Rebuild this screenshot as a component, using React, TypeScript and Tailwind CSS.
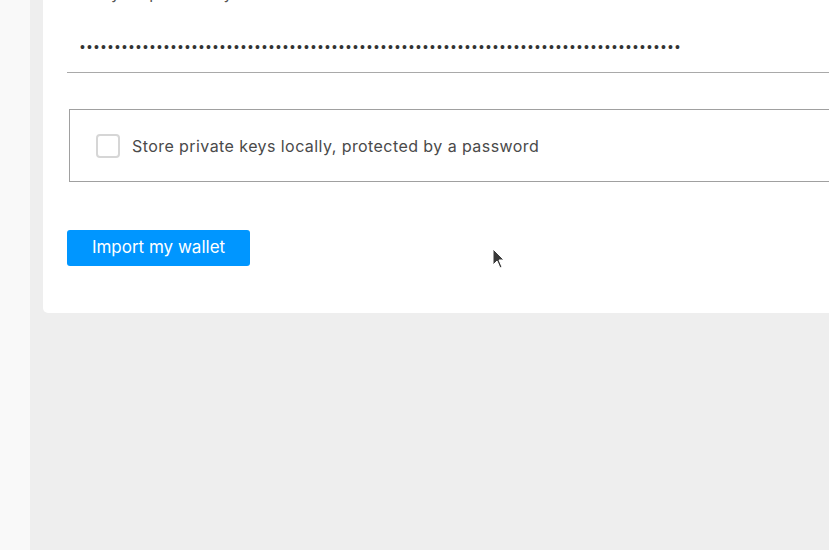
import React from "react";

const dots = "•".repeat(86);

export default function App() {
  return (
    <div className="relative flex w-[829px] h-[550px] overflow-hidden bg-[#eeeeee]" style={{ fontFamily: "Inter, 'Noto Sans', sans-serif" }}>
      <div className="w-[30px] shrink-0 bg-[#f9f9f9]" />
      <div className="flex-1 pl-[13px]">
        <div className="w-[900px] h-[313px] bg-white rounded-bl-[5px] overflow-hidden pl-[24px]">
          <div className="-mt-[17px] h-[20px] text-[16px] leading-[20px] text-[#555]">Enter your private key</div>
          <div className="mt-[28px] h-[42px] w-[820px] border-b border-[#a9a9a9] pl-[13px]">
            <div className="h-[32px] flex items-center text-[14px] tracking-[2.1px] text-[#333]" style={{ fontFamily: "'Liberation Sans', sans-serif" }}>
              {dots}
            </div>
          </div>
          <div className="mt-[36px] ml-[2px] h-[73px] w-[820px] border border-[#a0a0a0] flex items-center pl-[26px]">
            <div className="w-[24px] h-[24px] rounded-[4px] border-2 border-[#d6d6d6] bg-white" />
            <span className="ml-[12px] text-[16px] tracking-[0.43px] text-[#4a4a4a]">Store private keys locally, protected by a password</span>
          </div>
          <button className="mt-[48px] w-[183px] h-[36px] rounded-[3px] bg-[#0096ff] text-white text-[17px] flex items-center justify-center">
            Import my wallet
          </button>
        </div>
      </div>
      <svg className="absolute left-[492px] top-[248px]" width="14" height="22" viewBox="0 0 14 22">
        <path d="M1 1 L1 17 L5 13 L8 20 L10 19 L7 12 L12 12 Z" fill="#3a3a3a" stroke="#ffffff" strokeWidth="1" />
      </svg>
    </div>
  );
}
